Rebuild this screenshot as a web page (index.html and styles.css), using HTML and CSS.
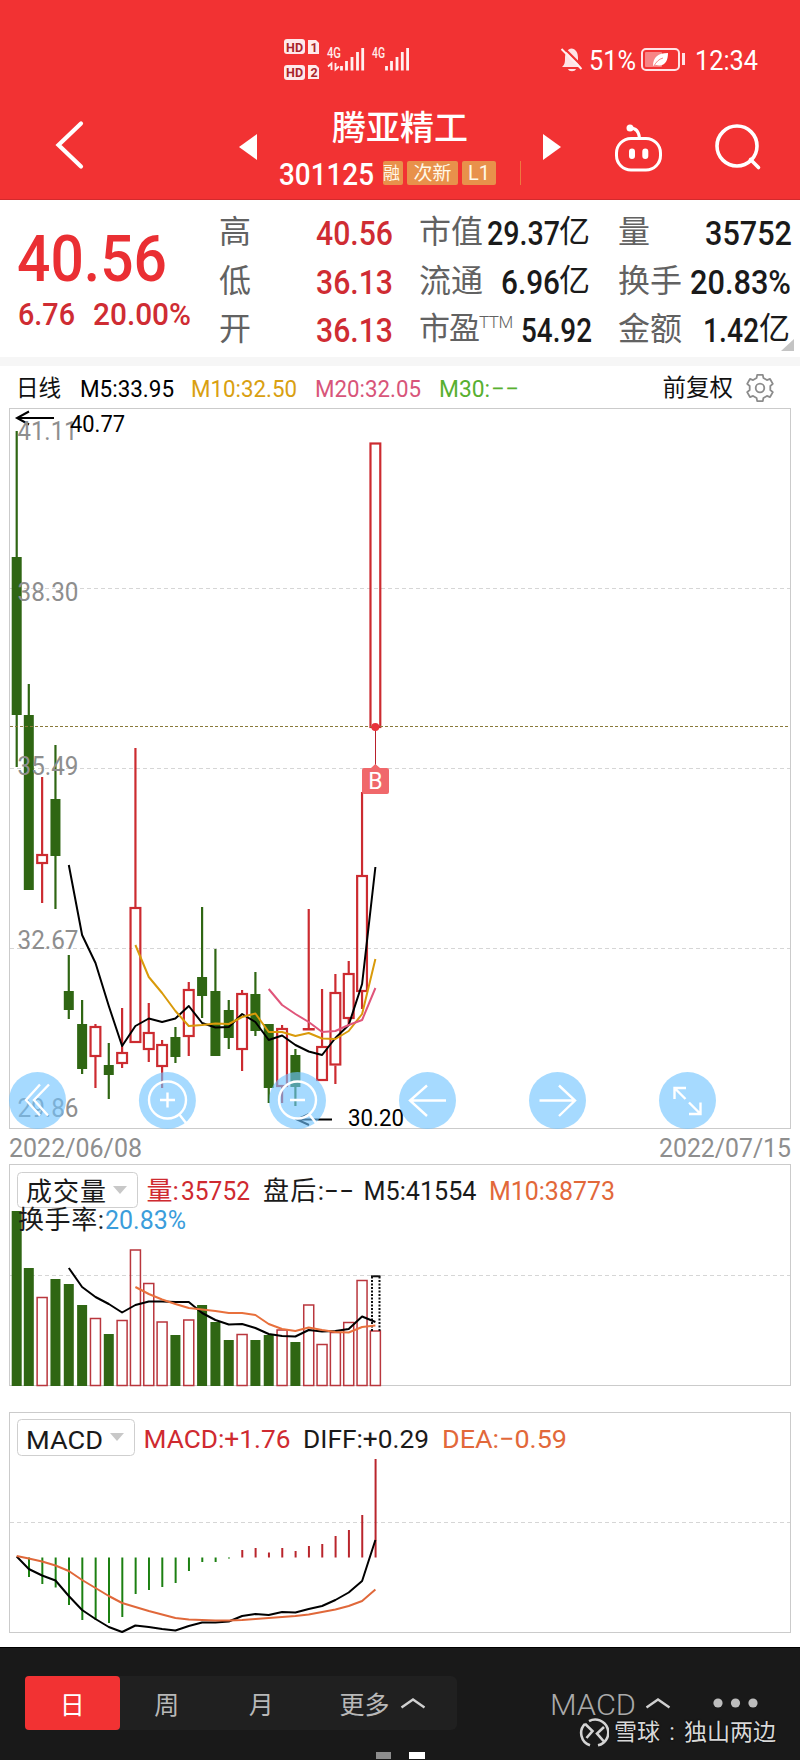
FILE: index.html
```html
<!DOCTYPE html>
<html lang="zh-CN">
<head>
<meta charset="utf-8">
<title>腾亚精工 301125</title>
<link rel="stylesheet" href="styles.css">
</head>
<body>
<header class="top">
  <div class="status">
    <svg class="signal" width="130" height="44" viewBox="282 37 130 44">
      <g fill="#ffe9ea"><rect x="284" y="39" width="21" height="15" rx="3"/><path d="M308 40h8l3 3v11h-11z"/><rect x="284" y="65" width="21" height="15" rx="3"/><path d="M308 65h8l3 3v11h-11z"/></g>
      <g class="badge"><text x="286" y="51.5" textLength="17">HD</text><text x="310.5" y="52">1</text><text x="286" y="77" textLength="17">HD</text><text x="310.5" y="77">2</text></g>
      <g class="net"><text x="327" y="58" textLength="14" lengthAdjust="spacingAndGlyphs">4G</text><text x="372" y="58" textLength="13" lengthAdjust="spacingAndGlyphs">4G</text></g>
      <path d="M328 66.500l3.500-3v6.500M335.500 63v6.500l3.500-3" fill="none" stroke="#ffe9ea" stroke-width="1.800"/>
      <path d="M341.500 66v4.500M346.500 61v9.500M352 57v13.500M357.500 52v18.500M362.700 48v22.500M386.500 66v4.500M391.500 61v9.500M397 57v13.500M402.300 52v18.500M407.600 48v22.500" stroke="#fff0f0" stroke-width="2.800"/>
    </svg>
    <svg class="bell" width="24" height="26" viewBox="560 46 24 26"><path d="M562 67c3-3 3-5 3-9 0-6 3-9 6.500-9.500 4 .500 6.500 3.500 6.500 9.500 0 4 0 6 3 9zM568 69h8c-1 3-7 3-8 0z" fill="#ffe3e6"/><path d="M563.500 47.500l20 20" stroke="#f23233" stroke-width="2.200"/><path d="M561.500 49l20 20" stroke="#fff0f0" stroke-width="2"/></svg>
    <svg class="fit thin battext" width="48" height="26"><text x="0" y="22.500" textLength="47" lengthAdjust="spacingAndGlyphs" font-size="27">51%</text></svg>
    <svg class="battery" width="46" height="26" viewBox="639 46 46 26"><rect x="641" y="49" width="37" height="21" rx="4" fill="none" stroke="#ffe3e6" stroke-width="2"/><rect x="644" y="52" width="17" height="15" rx="1" fill="#f78586"/><path d="M652 66c0-9 5-13 15-13 0 8-3 14-12 12z" fill="#fff"/><path d="M653 66c2-4 5-7 9-8" stroke="#f78586" fill="none"/><path d="M682.500 53v12" stroke="#ffe3e6" stroke-width="3"/></svg>
    <svg class="fit thin clock" width="64" height="26"><text x="0" y="22.500" textLength="63" lengthAdjust="spacingAndGlyphs" font-size="27">12:34</text></svg>
  </div>
  <nav class="nav">
    <svg class="back" width="32" height="54" viewBox="54 120 32 54"><path d="M81 123.500L58.500 145 81 166.500" fill="none" stroke="#fff" stroke-width="4.200" stroke-linecap="round"/></svg>
    <svg class="prev" width="18" height="26"><path d="M0 13L18 0v26z" fill="#fff"/></svg>
    <div class="stock">
      <h1>腾亚精工</h1>
      <div class="code">
        <svg class="fit bold" width="95" height="26"><text x="-1" y="25" textLength="95" lengthAdjust="spacingAndGlyphs" font-size="31">301125</text></svg>
        <span class="tag cut">融</span><span class="tag">次新</span><span class="tag narrow">L1</span><i></i>
      </div>
    </div>
    <svg class="next" width="18" height="26"><path d="M18 13L0 0v26z" fill="#fff"/></svg>
    <svg class="robot" width="52" height="52" viewBox="613 121 52 52" fill="none" stroke="#fff" stroke-width="3"><rect x="616.500" y="138.500" width="44" height="31.500" rx="14.500"/><path d="M630 128c6 0 9 4 9.500 10"/><circle cx="630" cy="128" r="3.500" fill="#fff" stroke="none"/><path d="M632 151.500v4.500M645.300 151.500v4.500" stroke-width="6" stroke-linecap="round"/></svg>
    <svg class="search" width="52" height="52" viewBox="712 121 52 52" fill="none" stroke="#fff" stroke-width="3.600"><circle cx="737" cy="146" r="20"/><path d="M750.500 159.500l8 8" stroke-linecap="round"/></svg>
  </nav>
</header>

<section class="quote">
  <div class="price">
    <svg class="fit bold bright" width="150" height="50"><text x="-2" y="48.500" textLength="150" lengthAdjust="spacingAndGlyphs" font-size="65">40.56</text></svg>
    <div class="change">
      <svg class="fit bold" width="56" height="28"><text x="-1" y="25" textLength="57" lengthAdjust="spacingAndGlyphs" font-size="32">6.76</text></svg>
      <svg class="fit bold" width="98" height="28"><text x="-1" y="25" textLength="98" lengthAdjust="spacingAndGlyphs" font-size="32">20.00%</text></svg>
    </div>
  </div>
  <dl class="col red">
    <div><dt>高</dt><dd><svg class="fit bold" width="75" height="30"><text x="0" y="27.500" textLength="77" lengthAdjust="spacingAndGlyphs" font-size="33">40.56</text></svg></dd></div>
    <div><dt>低</dt><dd><svg class="fit bold" width="75" height="30"><text x="0" y="27.500" textLength="77" lengthAdjust="spacingAndGlyphs" font-size="33">36.13</text></svg></dd></div>
    <div><dt>开</dt><dd><svg class="fit bold" width="75" height="30"><text x="0" y="27.500" textLength="77" lengthAdjust="spacingAndGlyphs" font-size="33">36.13</text></svg></dd></div>
  </dl>
  <dl class="col">
    <div><dt>市值</dt><dd><svg class="fit bold" width="71" height="30"><text x="0" y="27.500" textLength="73" lengthAdjust="spacingAndGlyphs" font-size="33">29.37</text></svg><b>亿</b></dd></div>
    <div><dt>流通</dt><dd><svg class="fit bold" width="57" height="30"><text x="0" y="27.500" textLength="59" lengthAdjust="spacingAndGlyphs" font-size="33">6.96</text></svg><b>亿</b></dd></div>
    <div><dt class="tight">市盈<sup>TTM</sup></dt><dd><svg class="fit bold" width="69" height="30"><text x="0" y="27.500" textLength="71" lengthAdjust="spacingAndGlyphs" font-size="33">54.92</text></svg></dd></div>
  </dl>
  <dl class="col">
    <div><dt>量</dt><dd><svg class="fit bold" width="85" height="30"><text x="0" y="27.500" textLength="87" lengthAdjust="spacingAndGlyphs" font-size="33">35752</text></svg></dd></div>
    <div><dt>换手</dt><dd><svg class="fit bold" width="100" height="30"><text x="0" y="27.500" textLength="101" lengthAdjust="spacingAndGlyphs" font-size="33">20.83%</text></svg></dd></div>
    <div><dt>金额</dt><dd><svg class="fit bold" width="54" height="30"><text x="-1" y="27.500" textLength="56" lengthAdjust="spacingAndGlyphs" font-size="33">1.42</text></svg><b>亿</b></dd></div>
  </dl>
  <svg class="fold" width="13" height="12"><path d="M13 0v12H0z" fill="#c4c4c4"/></svg>
</section>

<section class="legend">
  <span class="period">日线</span>
  <svg class="fit" width="94" height="24"><text x="0" y="20.500" textLength="94" lengthAdjust="spacingAndGlyphs" font-size="24">M5:33.95</text></svg>
  <svg class="fit gold" width="105" height="24"><text x="-2" y="20.500" textLength="106" lengthAdjust="spacingAndGlyphs" font-size="24">M10:32.50</text></svg>
  <svg class="fit pink" width="105" height="24"><text x="-2" y="20.500" textLength="106" lengthAdjust="spacingAndGlyphs" font-size="24">M20:32.05</text></svg>
  <svg class="fit green" width="78" height="24"><text x="-2" y="20.500" textLength="51" lengthAdjust="spacingAndGlyphs" font-size="24">M30:</text><text x="50" y="20.500" textLength="28" lengthAdjust="spacing" font-size="24">−−</text></svg>
  <span class="adjust">前复权</span>
  <svg class="gear" width="32" height="32" viewBox="-16 -16 32 32" fill="none" stroke="#8c8c8c" stroke-width="1.800" stroke-linejoin="round"><path id="gear"/><circle r="4.300"/></svg>
</section>

<svg class="chart" width="800" height="722" viewBox="0 408 800 722">
  <rect class="frame" x="9.500" y="408.500" width="781" height="720"/>
  <path class="grid" d="M10 588.500H790M10 768.500H790M10 948.500H790"/>
  <g id="candles"></g>
  <path d="M10 726.500H790" stroke="#8a7a3a" stroke-dasharray="3 2"/>
  <g id="averages"></g>
  <path d="M375.500 727v38" stroke="#b8202c"/><circle cx="375.300" cy="727" r="4" fill="#e8323a"/>
  <path d="M371 768l4.300-4 4.700 4h7a2 2 0 0 1 2 2v22a2 2 0 0 1-2 2h-23a2 2 0 0 1-2-2v-22a2 2 0 0 1 2-2z" fill="#f0686b"/>
  <text x="375.500" y="789" font-size="23" fill="#fff" text-anchor="middle">B</text>
  <path class="pointer" d="M17 418H54M29 411.500L17 418 29 424.500M297 1119.500H332M309 1114L297 1119.500 309 1125"/>
  <g class="scale" font-size="26">
    <text x="17.500" y="439.500" textLength="60" lengthAdjust="spacingAndGlyphs">41.11</text>
    <text x="17.500" y="600.500" textLength="61" lengthAdjust="spacingAndGlyphs">38.30</text>
    <text x="17.500" y="774.500" textLength="61" lengthAdjust="spacingAndGlyphs">35.49</text>
    <text x="17.500" y="948.500" textLength="61" lengthAdjust="spacingAndGlyphs">32.67</text>
    <text x="17.500" y="1116.500" textLength="61" lengthAdjust="spacingAndGlyphs">29.86</text>
  </g>
  <text x="70" y="431.500" font-size="23.500" textLength="55" lengthAdjust="spacingAndGlyphs">40.77</text>
  <text x="348" y="1126" font-size="23.500" textLength="56" lengthAdjust="spacingAndGlyphs">30.20</text>
  <g fill="#6fc3ff" fill-opacity=".62"><circle cx="37.500" cy="1100.500" r="28.500"/><circle cx="167.400" cy="1100.500" r="28.500"/><circle cx="297.500" cy="1100.500" r="28.500"/><circle cx="427.500" cy="1100.500" r="28.500"/><circle cx="557.500" cy="1100.500" r="28.500"/><circle cx="687.500" cy="1100.500" r="28.500"/></g>
  <g fill="none" stroke="#fff" stroke-width="2.400">
    <path d="M40 1084.500L26 1100 40 1115.500M49 1084.500L34 1100 48 1115.500"/>
    <circle cx="167.500" cy="1100" r="18.500"/><path d="M160 1100h15M167.500 1092.500v15M179 1114l7 9"/>
    <circle cx="297.500" cy="1100" r="18.500"/><path d="M290 1100h15M309 1114l7 9"/>
    <path d="M446 1100.500H410M427 1085.500L410 1100.500 427 1116M539.500 1100.500H575M559 1085.500L575 1100.500 559 1116"/>
    <path d="M685.500 1099L675 1088.500M686 1088H674.500V1099M689 1102.500L700 1113.500M689 1114H700.500V1102.500"/>
  </g>
</svg>
<div class="dates">
  <svg class="fit" width="133" height="22"><text x="-1" y="20" textLength="133" lengthAdjust="spacingAndGlyphs" font-size="26">2022/06/08</text></svg>
  <svg class="fit" width="133" height="22"><text x="1" y="20" textLength="132" lengthAdjust="spacingAndGlyphs" font-size="26">2022/07/15</text></svg>
</div>

<svg class="chart volume" width="800" height="224" viewBox="0 1164 800 224">
  <rect class="frame" x="9.500" y="1164.500" width="781" height="221"/>
  <path class="grid" d="M10 1275.500H790"/>
  <g id="volumes"></g>
  <path d="M372 1331V1276.500M379.500 1276.500V1331" stroke="#111" stroke-width="2" stroke-dasharray="2 1.500"/><path d="M371 1276.300H380.500" stroke="#111" stroke-width="2"/>
  <g id="volume-averages"></g>
  <rect x="17.500" y="1172.500" width="120" height="35" rx="4" fill="#fff" stroke="#cfcfcf"/>
  <path d="M113 1186h14l-7 8z" fill="#c8c8c8"/>
  <g font-size="26" fill="#1a1a1a">
    <text x="26" y="1201" textLength="80">成交量</text>
    <text x="146.500" y="1200" fill="#cf2a30">量:</text>
    <text x="181" y="1200" textLength="69" lengthAdjust="spacingAndGlyphs" fill="#cf2a30">35752</text>
    <text x="263" y="1200" textLength="61">盘后:</text><text x="324" y="1199.500" textLength="30">−−</text>
    <text x="363.500" y="1200" textLength="113" lengthAdjust="spacingAndGlyphs">M5:41554</text>
    <text x="489" y="1200" textLength="126" lengthAdjust="spacingAndGlyphs" fill="#e2683a">M10:38773</text>
    <text x="18" y="1229" textLength="86">换手率:</text>
    <text x="105" y="1228.500" textLength="81" lengthAdjust="spacingAndGlyphs" fill="#3b9ddb">20.83%</text>
  </g>
</svg>

<svg class="chart macd" width="800" height="222" viewBox="0 1412 800 222">
  <rect class="frame" x="9.500" y="1412.500" width="781" height="220"/>
  <path class="grid" d="M10 1522.500H790"/>
  <g id="macd"></g>
  <rect x="17.500" y="1419.500" width="117" height="36" rx="4" fill="#fff" stroke="#cfcfcf"/>
  <path d="M110 1433h14l-7 8z" fill="#c8c8c8"/>
  <g font-size="26.500" fill="#1a1a1a">
    <text x="26" y="1448.500" textLength="77" lengthAdjust="spacingAndGlyphs">MACD</text>
    <text x="143.500" y="1447.500" textLength="147" lengthAdjust="spacingAndGlyphs" fill="#cf2a30">MACD:+1.76</text>
    <text x="303" y="1447.500" textLength="126" lengthAdjust="spacingAndGlyphs">DIFF:+0.29</text>
    <text x="442" y="1447.500" textLength="125" lengthAdjust="spacingAndGlyphs" fill="#e2683a">DEA:−0.59</text>
  </g>
</svg>

<footer class="bar">
  <div class="tools">
    <div class="tabs"><span class="on">日</span><span>周</span><span>月</span><span class="more">更多<svg width="26" height="12" viewBox="0 0 26 12"><path d="M1.500 10.500L13 2.500 24.500 10.500"/></svg></span></div>
    <div class="indicator"><svg class="fit thin" width="84" height="26"><text x="-1" y="25" textLength="86" lengthAdjust="spacingAndGlyphs" font-size="30">MACD</text></svg><svg class="chev" width="26" height="12" viewBox="0 0 26 12"><path d="M1.500 10.500L13 2.500 24.500 10.500"/></svg></div>
    <svg class="dots" width="46" height="10"><g fill="#bdbdbd"><circle cx="5" cy="5" r="4.600"/><circle cx="22.500" cy="5" r="4.600"/><circle cx="40" cy="5" r="4.600"/></g></svg>
  </div>
  <div class="pager"><i></i><i class="current"></i></div>
  <div class="watermark">
    <svg width="30" height="30" viewBox="-15 -15 30 30" fill="none" stroke="#d4d4d4" stroke-width="2.600"><path d="M-5-11.800A13 13 0 1 1 4 12.300M-4 12.300A13 13 0 0 1-9-9.200M-9-9.200L-1.500-2 -7.500 5M10-6L3 0.500 9.500 8"/></svg>
    <span>雪球<em>:</em>独山两边</span>
  </div>
</footer>
<script src="charts.js"></script>
</body>
</html>
```

FILE: styles.css
```css
* { box-sizing: border-box; }
body { margin: 0; width: 800px; height: 1760px; background: #fff; color: #1a1a1a; font-family: Roboto, "Noto Sans CJK SC", sans-serif; overflow: hidden; }
svg { display: block; flex: none; }
.fit { fill: currentColor; overflow: visible; }
.bold { font-weight: 500; }
.thin { font-weight: 400; }

.top { height: 200px; background: #f23233; color: #fff; border-bottom: 1px solid #d22a2d; }
.status { height: 94px; display: flex; align-items: flex-start; padding: 37px 0 0 282px; }
.badge { font-size: 12.5px; font-weight: 700; fill: #a8242b; }
.net { font-size: 14px; font-weight: 500; fill: #ffecec; }
.bell { margin: 9px 0 0 148px; }
.battext { margin: 10px 0 0 5px; }
.battery { margin: 9px 0 0 3px; }
.clock { margin: 10px 0 0 9px; }
.nav { height: 105px; display: flex; align-items: center; padding-left: 54px; }
.prev { margin-left: 153px; }
.stock { width: 286px; height: 105px; padding-top: 14px; }
h1 { margin: 0; text-align: center; font-size: 34px; line-height: 40px; font-weight: 500; }
.code { display: flex; align-items: center; height: 24px; margin-top: 13px; padding-left: 23px; }
.tag { height: 24px; width: 51px; margin-left: 4px; border-radius: 2px; background: #e8914b; color: #fff8e8; font-size: 19px; line-height: 25px; text-align: center; flex: none; }
.tag.cut { width: 20px; margin-left: 8px; text-indent: -3px; overflow: hidden; font-size: 17px; }
.tag.narrow { width: 34px; font-size: 20px; }
.code i { width: 1px; height: 24px; margin-left: 24px; background: #ee793f; }
.robot { margin-left: 52px; }
.search { margin-left: 47px; }

.quote { height: 157px; display: flex; position: relative; }
.price { width: 219px; padding: 32px 0 0 19px; color: #cf2c33; }
.bright { color: #ea2f33; }
.change { display: flex; gap: 19px; margin-top: 18px; }
.col { margin: 8px 28px 0 0; width: 172px; flex: none; }
.col + .col { width: 171px; }
.col + .col + .col { width: 172px; margin-right: 0; }
.col > div { height: 48.5px; display: flex; justify-content: space-between; align-items: center; white-space: nowrap; }
dt { font-size: 32px; line-height: 46px; color: #626262; font-weight: 400; flex: none; }
dt.tight { font-size: 31px; letter-spacing: -1px; }
dd { margin: 0; display: flex; align-items: center; }
dd b { font-size: 31px; line-height: 46px; font-weight: 400; margin-left: 1px; }
.red dd { color: #cf2c33; }
sup { font-size: 17px; line-height: 1; vertical-align: 11px; letter-spacing: -.5px; font-weight: 300; }
.fold { position: absolute; right: 6px; bottom: 6px; }

.legend { height: 51px; border-top: 9px solid #f6f6f6; display: flex; align-items: center; padding: 2px 25px 0 16px; }
.legend .fit { margin-right: 19px; color: #000; }
.period, .adjust { font-size: 22.5px; line-height: 28px; color: #111; }
.period { margin-right: 19px; }
.legend .gold { color: #d9a011; }
.legend .pink { color: #d8557a; }
.legend .green { color: #58b030; margin-right: 0; }
.adjust { font-size: 23.5px; margin-left: auto; }
.gear { margin-left: 11px; margin-right: -1px; }

.chart { font-family: Roboto, "Noto Sans CJK SC", sans-serif; }
.frame { fill: none; stroke: #cbcbcb; }
.grid { stroke: #d6d6d6; stroke-dasharray: 4 3; }
.scale { fill: #8e8e8e; }
.pointer { fill: none; stroke: #000; stroke-width: 2; }
.dates { height: 34px; padding: 7px 9px 0 10px; display: flex; justify-content: space-between; color: #8e8e8e; }
.macd { margin-top: 24px; }

.bar { margin-top: 13px; height: 113px; background: #191919; border-top: 1px solid #000; position: relative; }
.tools { height: 54px; margin-top: 28px; padding-left: 25px; display: flex; align-items: center; }
.tabs { display: flex; width: 432px; height: 54px; border-radius: 6px; background: #202020; }
.tabs span { width: 94.5px; display: flex; align-items: center; justify-content: center; color: #b8b8b8; font-size: 25px; }
.tabs .on { background: #f23233; color: #fff; border-radius: 4px; }
.tabs .more { width: 148px; }
.tabs svg, .chev { fill: none; stroke: #d0d0d0; stroke-width: 2.4; margin-left: 10px; }
.indicator { display: flex; align-items: center; margin-left: 94px; color: #aaa; }
.indicator .fit { font-weight: 300; }
.dots { margin-left: 42px; }
.pager { display: flex; gap: 18px; height: 7px; margin: 22px 0 0 376px; }
.pager i { width: 15px; height: 7px; background: #8d8d8d; }
.pager .current { width: 16px; background: #fff; }
.watermark { position: absolute; left: 579px; top: 70px; height: 30px; display: flex; align-items: center; gap: 5px; color: #d8d8d8; font-size: 23px; line-height: 30px; white-space: nowrap; text-shadow: 0 0 2px #000; }
.watermark em { font-style: normal; display: inline-block; width: 24px; text-align: center; }
```

FILE: charts.js
```js
const NS = 'http://www.w3.org/2000/svg';
const add = (parent, tag, attrs) => {
  const el = document.createElementNS(NS, tag);
  for (const k in attrs) el.setAttribute(k, attrs[k]);
  document.getElementById(parent).appendChild(el);
};
const xAt = i => i === 0 ? 16.7 : 28.8 + (i - 1) * 13.33;
const line = (parent, start, ys, color) => add(parent, 'polyline', {
  points: ys.map((y, i) => xAt(i + start).toFixed(1) + ',' + y).join(' '),
  fill: 'none', stroke: color, 'stroke-width': 2, 'stroke-linejoin': 'round'
});
const GREEN = '#2f6613', RED = '#cc2b30';

// Each row: falling(0)/rising(1), body top, body bottom, wick top, wick bottom, volume top
const days = [
  [0,557,715,431,767,1211],[0,715,890,684,890,1268],[1,854,864,777,903,1297],[0,799,856,745,909,1279],
  [0,991,1010,955,1019,1284],[0,1024,1069,1000,1074,1305],[1,1026,1057,1024,1088,1318],[0,1065,1075,1043,1099,1334],
  [1,1052,1064,1008,1068,1320],[1,907,1043,748,907,1249.5],[1,1032,1050,1003,1062,1283],[1,1044,1067,1040,1088,1321.5],
  [0,1037,1057,1027,1063,1335],[1,989,1037,982,1056,1319.5],[0,977,996,907,1018,1305],[0,991,1056,949,1056,1322],
  [0,1010,1038,1000,1049,1340],[1,993,1050,990,1071,1334],[0,994,1031,972,1036,1340],[0,1024,1088,1024,1103,1335],
  [1,1028,1087,1025,1103,1329.5],[0,1055,1087,1049,1106,1342],[1,1028,1030.5,909,1029,1304.5],[1,1046,1081,989,1081,1344],
  [1,992,1065.5,974,1084,1332],[1,973,1019,961,1026,1322],[1,875,992,792,1009,1280],[1,442.5,728,442.5,728,1330.5]
];
days.forEach(([up, top, bottom, high, low, vol], i) => {
  const x = xAt(i), color = up ? RED : GREEN;
  if (high < top) add('candles', 'path', { d: `M${x} ${high}V${top}`, stroke: color, 'stroke-width': 2.2 });
  if (low > bottom) add('candles', 'path', { d: `M${x} ${bottom}V${low}`, stroke: color, 'stroke-width': 2.2 });
  if (up) {
    if (bottom - top < 4) add('candles', 'rect', { x: x - 6, y: top, width: 12, height: 2.5, fill: RED });
    else add('candles', 'rect', { x: x - 4.9, y: top + 1, width: 9.8, height: bottom - top - 2, fill: 'none', stroke: color, 'stroke-width': 2.2 });
    add('volumes', 'rect', { x: x - 5, y: vol + .5, width: 10, height: 1385.5 - vol - .5, fill: 'none', stroke: '#b9363d', 'stroke-width': 1.5 });
  } else {
    add('candles', 'rect', { x: x - 5, y: top, width: 10, height: bottom - top, fill: color });
    add('volumes', 'rect', { x: x - 5, y: vol, width: 10, height: 1386 - vol, fill: color });
  }
});

line('averages', 4, [865,935,963,1006,1046,1026,1018.5,1022,1018.5,1006,1023,1027.5,1027,1014,1022,1040,1035.5,1045,1051.5,1055,1038,1025,984,867], '#000');
line('averages', 9, [945,977,993,1011,1026,1025,1023.5,1024,1017,1013.5,1032,1032,1036,1033,1038.5,1039,1031,1014,959], '#d99a0a');
line('averages', 19, [989,1005,1014,1022,1032,1031,1025,1020,988], '#e0557a');
line('volume-averages', 4, [1268,1287,1297,1304,1312.5,1305,1301.5,1301.5,1302,1302,1313,1320,1324.5,1324,1328,1334,1336,1336.5,1330,1331.5,1331,1329,1316.5,1322], '#000');
line('volume-averages', 9, [1287,1294,1299.5,1304,1308,1309.5,1311,1313,1313,1315,1324,1329,1331,1327.5,1330,1332,1332.5,1327,1325.5], '#e8703c');

const ends = [0,1577,1584,1587.5,1605,1620,1620,1623,1617,1594,1590,1587,1583,1571,1562,1562,1558.5,1550,1548,1552.5,1548,1551,1546,1544,1536,1530,1515,1459];
ends.forEach((y, i) => {
  if (i) add('macd', 'path', { d: `M${xAt(i) + .2} 1557.5V${y}`, stroke: i < 17 ? '#1c8012' : '#b9252c', 'stroke-width': 2 });
});
line('macd', 0, [1556.5,1569,1575.5,1580.5,1596,1610,1619,1627,1632,1625.5,1627,1629,1630.5,1626,1622.5,1622.5,1621.5,1616,1614,1615,1612,1612.5,1609,1606,1600,1592.5,1581,1540], '#000');
line('macd', 0, [1556,1558.5,1561.5,1565.5,1571,1580,1588,1596,1603,1607,1611,1614.5,1618,1619.5,1620,1620.5,1620.5,1620,1619,1618,1617,1616,1614.5,1612,1609.5,1606,1601,1589.5], '#e0683a');

// Six-toothed cog outline
const cog = [];
for (let k = 0; k < 6; k++) {
  for (const [r, a] of [[13.5, -12], [13.5, 12], [10.5, 19], [10.5, 41]]) {
    const t = (k * 60 - 90 + a) * Math.PI / 180;
    cog.push((r * Math.cos(t)).toFixed(2) + ' ' + (r * Math.sin(t)).toFixed(2));
  }
}
document.getElementById('gear').setAttribute('d', 'M' + cog.join('L') + 'Z');
```
